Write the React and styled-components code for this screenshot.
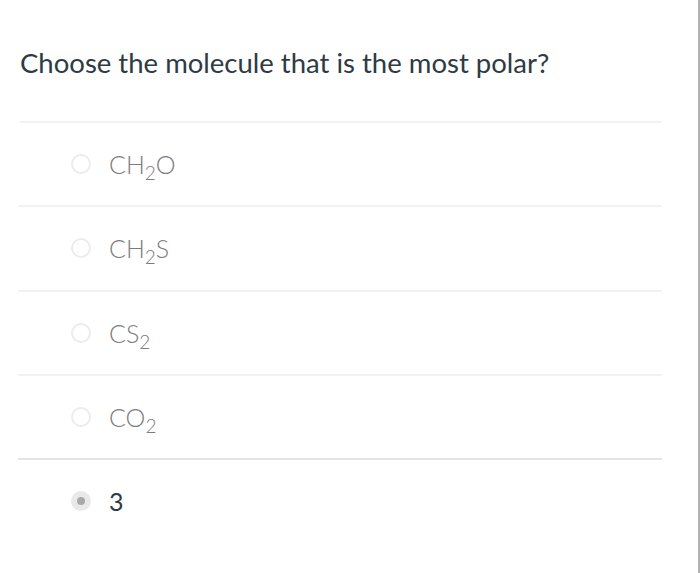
import React from "react";
import styled, { createGlobalStyle } from "styled-components";

const Global = createGlobalStyle`
  html, body {
    margin: 0;
    padding: 0;
    background: #fff;
  }
  body {
    font-family: Lato, "Noto Sans", sans-serif;
  }
`;

const Page = styled.div`
  width: 700px;
  height: 573px;
  box-sizing: border-box;
  border-right: 2px solid #b4b4b4;
  background: #fff;
  padding: 41px 36px 0 18px;
`;

const Question = styled.h1`
  margin: 0 0 0 2px;
  font-size: 27.5px;
  font-weight: 400;
  color: #2d3b45;
  line-height: 44px;
  height: 80px;
  border-bottom: 2px solid #f2f2f2;
`;

const Row = styled.label`
  display: flex;
  align-items: center;
  gap: 18px;
  height: 82.25px;
  padding-left: 53px;
  border-bottom: 2px solid ${(p) => (p.last ? "#e4e4e4" : "#f2f2f2")};
  border-bottom-width: ${(p) => (p.none ? 0 : 2)}px;
`;

const Radio = styled.span`
  width: 20px;
  height: 20px;
  border-radius: 50%;
  box-sizing: border-box;
  border: 2px solid #ececec;
  display: flex;
  align-items: center;
  justify-content: center;
  background: ${(p) => (p.checked ? "#e9e9e9" : "#fff")};
  border-color: ${(p) => (p.checked ? "#e9e9e9" : "#ececec")};
  &::after {
    content: "";
    display: ${(p) => (p.checked ? "block" : "none")};
    width: 8px;
    height: 8px;
    border-radius: 50%;
    background: #a9a9a9;
  }
`;

const Answer = styled.span`
  font-size: 25px;
  font-weight: ${(p) => (p.dark ? 400 : 300)};
  color: ${(p) => (p.dark ? "#2d3b45" : "#7c7c7c")};
  sub {
    font-size: 19px;
    vertical-align: -6px;
    line-height: 0;
  }
`;

const options = [
  <>CH<sub>2</sub>O</>,
  <>CH<sub>2</sub>S</>,
  <>CS<sub>2</sub></>,
  <>CO<sub>2</sub></>,
];

export default function App() {
  return (
    <Page>
      <Global />
      <Question>Choose the molecule that is the most polar?</Question>
      {options.map((o, i) => (
        <Row key={i} last={i === options.length - 1}>
          <Radio />
          <Answer>{o}</Answer>
        </Row>
      ))}
      <Row none>
        <Radio checked />
        <Answer dark>3</Answer>
      </Row>
    </Page>
  );
}
